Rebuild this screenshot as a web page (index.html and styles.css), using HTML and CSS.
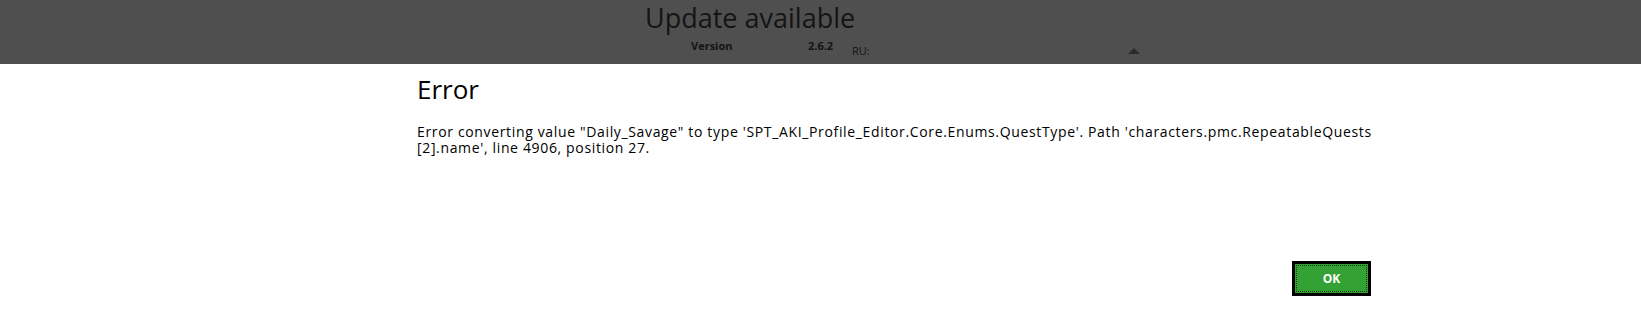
FILE: index.html
```html
<!DOCTYPE html>
<html>
<head>
    <title>Error</title>
    <link rel="stylesheet" href="styles.css">
</head>
<body>
    <div class="backdrop">
        <div class="update">
            <div class="update-title">Update available</div>
            <div class="update-row">
                <span class="version-label">Version</span>
                <span class="version-value">2.6.2</span>
                <span class="lang">RU:</span>
                <span class="scroll-up"></span>
            </div>
        </div>
    </div>
    <div class="dialog">
        <div class="dialog-body">
            <h1 class="dialog-title">Error</h1>
            <p class="dialog-message">Error converting value "Daily_Savage" to type 'SPT_AKI_Profile_Editor.Core.Enums.QuestType'. Path 'characters.pmc.RepeatableQuests<wbr>[2].name', line 4906, position 27.</p>
            <div class="dialog-buttons">
                <button class="btn-ok" type="button">OK</button>
            </div>
        </div>
    </div>
</body>
</html>
```

FILE: styles.css
```css
body {
    margin: 0;
    font-family: "Open Sans", "Noto Sans", sans-serif;
    background: white;
    color: #000;
}
.backdrop {
    height: 64px;
    background: #4f4f4f;
    color: #141414;
    overflow: hidden;
}
.update {
    padding-left: 645px;
}
.update-title {
    font-size: 27px;
    line-height: 32px;
    padding-top: 2px;
}
.update-row {
    display: flex;
    align-items: flex-start;
    font-size: 11px;
    padding-top: 4px;
}
.version-label {
    font-weight: 700;
    margin-left: 46px;
    width: 117px;
}
.version-value {
    font-weight: 700;
    width: 44px;
}
.lang {
    padding-top: 5px;
    width: 276px;
}
.scroll-up {
    margin-top: 10px;
    width: 0;
    height: 0;
    border-left: 6px solid transparent;
    border-right: 6px solid transparent;
    border-bottom: 6px solid #2b2b2b;
}
.dialog-body {
    margin-left: 417px;
    width: 980px;
}
.dialog-title {
    margin: 0;
    padding-top: 8px;
    font-size: 26px;
    font-weight: 400;
    line-height: 34px;
}
.dialog-message {
    margin: 18px 0 0;
    font-size: 14px;
    letter-spacing: 0.65px;
    line-height: 16px;
}
.dialog-buttons {
    display: flex;
    justify-content: flex-end;
    padding-top: 105px;
    padding-right: 26px;
}
.btn-ok {
    width: 79px;
    height: 35px;
    background: #33a133;
    border: 3px solid #000;
    outline: 1px dotted #1a3a1a;
    outline-offset: -5px;
    color: white;
    font-family: inherit;
    font-size: 12px;
    font-weight: 700;
}
```
